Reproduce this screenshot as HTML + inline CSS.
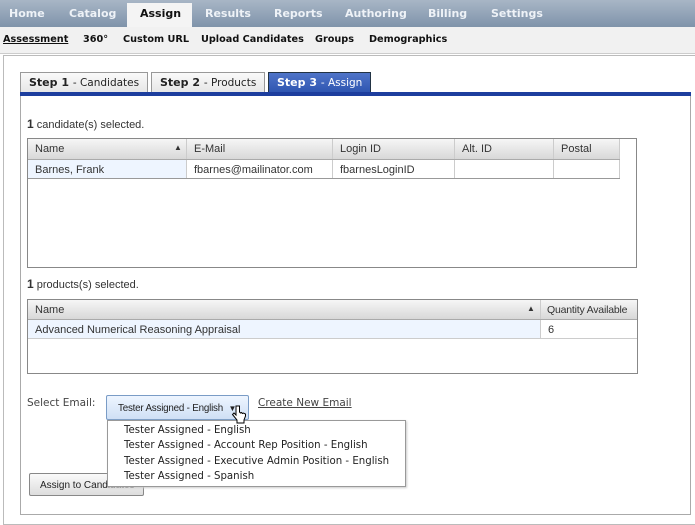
<!DOCTYPE html>
<html><head><style>
*{box-sizing:border-box;margin:0;padding:0}
body{width:695px;height:520px;overflow:hidden;background:#fff;font-family:"DejaVu Sans","Liberation Sans",sans-serif;position:relative;color:#222}
.a{position:absolute}
.nav{left:0;top:0;width:695px;height:27px;background:linear-gradient(#a8b6c6,#7f93aa);}
.sub{left:0;top:27px;width:695px;height:27px;background:#f1f1f1;border-bottom:1px solid #ccc}
.sub span{position:absolute;top:7px;font-size:9.7px;font-weight:bold;color:#111}
.tab{top:72px;height:21px;border:1px solid #999;border-bottom:none;background:linear-gradient(#fafafa,#e6e6e6);font-size:11px;padding:3px 0 0 8px;font-weight:bold;white-space:nowrap}
.tab span{font-weight:normal;font-size:10.5px}
.t{font-family:"Liberation Sans",sans-serif;font-size:11px;color:#333}
.hdr{background:linear-gradient(#f6f6f6,#d8d8d8);border-bottom:1px solid #aaa}
.cell{position:absolute;top:0;height:100%;border-right:1px solid #ccc;padding:4px 0 0 7px;font-family:"Liberation Sans",sans-serif;font-size:11px;color:#333;white-space:nowrap;overflow:hidden}
</style></head><body>
<div class="a nav"></div>
<div class="a" style="left:127px;top:3px;width:65px;height:24px;background:#f4f4f4"></div>
<div class="a" style="left:0;top:0;width:695px;height:27px;font-size:11px">
<span class="a" style="left:9px;top:7px;font-weight:bold;color:#eef2f7">Home</span>
<span class="a" style="left:69px;top:7px;font-weight:bold;color:#eef2f7">Catalog</span>
<span class="a" style="left:140px;top:7px;font-weight:bold;color:#111">Assign</span>
<span class="a" style="left:205px;top:7px;font-weight:bold;color:#eef2f7">Results</span>
<span class="a" style="left:274px;top:7px;font-weight:bold;color:#eef2f7">Reports</span>
<span class="a" style="left:345px;top:7px;font-weight:bold;color:#eef2f7">Authoring</span>
<span class="a" style="left:428px;top:7px;font-weight:bold;color:#eef2f7">Billing</span>
<span class="a" style="left:491px;top:7px;font-weight:bold;color:#eef2f7">Settings</span>
</div>
<div class="a sub">
<span style="left:3px;text-decoration:underline">Assessment</span>
<span style="left:83px">360°</span>
<span style="left:123px">Custom URL</span>
<span style="left:201px">Upload Candidates</span>
<span style="left:315px">Groups</span>
<span style="left:369px">Demographics</span>
</div>
<div class="a" style="left:3px;top:55px;width:700px;height:470px;border:1px solid #bbb"></div>
<div class="a tab" style="left:20px;width:128px">Step 1 <span>- Candidates</span></div>
<div class="a tab" style="left:151px;width:114px">Step 2 <span>- Products</span></div>
<div class="a tab" style="left:268px;width:103px;background:linear-gradient(#4f74c8,#2d54b0);color:#fff;border-color:#234">Step 3 <span>- Assign</span></div>
<div class="a" style="left:20px;top:92px;width:671px;height:4px;background:#1d3e9e"></div>
<div class="a" style="left:20px;top:96px;width:671px;height:419px;border:1px solid #aaa;border-top:none"></div>
<div class="a t" style="left:27px;top:117px"><b style="font-size:12px">1</b> candidate(s) selected.</div>
<div class="a" style="left:27px;top:138px;width:610px;height:130px;border:1px solid #888">
<div class="a hdr" style="left:0;top:0;width:592px;height:21px">
<div class="cell" style="left:0;width:159px">Name<span style="position:absolute;left:146px;top:4px;font-size:8px">▲</span></div>
<div class="cell" style="left:159px;width:146px">E-Mail</div>
<div class="cell" style="left:305px;width:122px">Login ID</div>
<div class="cell" style="left:427px;width:99px">Alt. ID</div>
<div class="cell" style="left:526px;width:66px">Postal</div></div>
<div class="a" style="left:0;top:21px;width:592px;height:19px;border-bottom:1px solid #999">
<div class="cell" style="left:0;width:159px;background:#eef5ff">Barnes, Frank</div>
<div class="cell" style="left:159px;width:146px">fbarnes@mailinator.com</div>
<div class="cell" style="left:305px;width:122px">fbarnesLoginID</div>
<div class="cell" style="left:427px;width:99px"></div>
<div class="cell" style="left:526px;width:66px"></div></div>
</div>
<div class="a t" style="left:27px;top:277px"><b style="font-size:12px">1</b> products(s) selected.</div>
<div class="a" style="left:27px;top:299px;width:611px;height:75px;border:1px solid #888">
<div class="a hdr" style="left:0;top:0;width:609px;height:20px">
<div class="cell" style="left:0;width:513px">Name<span style="position:absolute;left:499px;top:4px;font-size:8px">▲</span></div>
<div class="cell" style="left:513px;width:96px;border-right:none;padding-left:6px;font-size:10.5px;letter-spacing:-0.2px">Quantity Available</div></div>
<div class="a" style="left:0;top:20px;width:609px;height:19px;border-bottom:1px solid #ccc">
<div class="cell" style="left:0;width:513px;background:#eef5ff">Advanced Numerical Reasoning Appraisal</div>
<div class="cell" style="left:513px;width:96px;border-right:none">6</div></div>
</div>
<div class="a" style="left:27px;top:397px;font-size:10.5px;color:#444">Select Email:</div>
<div class="a" style="left:106px;top:395px;width:143px;height:25px;border:1px solid #7a9cc6;border-radius:2px;background:linear-gradient(#eef5ff,#cfe0f5);font-family:'Liberation Sans',sans-serif;font-size:9.8px;letter-spacing:-0.2px;padding:7px 0 0 11px;white-space:nowrap">Tester Assigned - English <span style="font-size:8px;margin-left:3px">▼</span></div>
<div class="a" style="left:258px;top:397px;font-size:10.5px;color:#444;text-decoration:underline">Create New Email</div>
<div class="a" style="left:29px;top:473px;width:115px;height:23px;border:1px solid #888;border-radius:2px;background:linear-gradient(#fafafa,#ddd);font-family:'Liberation Sans',sans-serif;font-size:10px;padding:6px 0 0 10px;white-space:nowrap;overflow:hidden">Assign to Candidates</div>
<div class="a" style="left:107px;top:420px;width:299px;height:67px;border:1px solid #999;background:#fff;box-shadow:1px 1px 2px #ccc;font-size:10.2px;line-height:15.3px;padding:2px 0 0 16px;color:#222;white-space:nowrap">
Tester Assigned - English<br>Tester Assigned - Account Rep Position - English<br>Tester Assigned - Executive Admin Position - English<br>Tester Assigned - Spanish</div>
<svg class="a" style="left:231px;top:405px" width="16" height="20" viewBox="0 0 16 20"><path d="M5 1v9l-2-2-1.5 1.5L6 15v3h7v-3l1.5-4V9l-2-1-1 .5-1-1-1 .5-1-1V1z" fill="#fff" stroke="#000" stroke-width="1"/></svg>
</body></html>
